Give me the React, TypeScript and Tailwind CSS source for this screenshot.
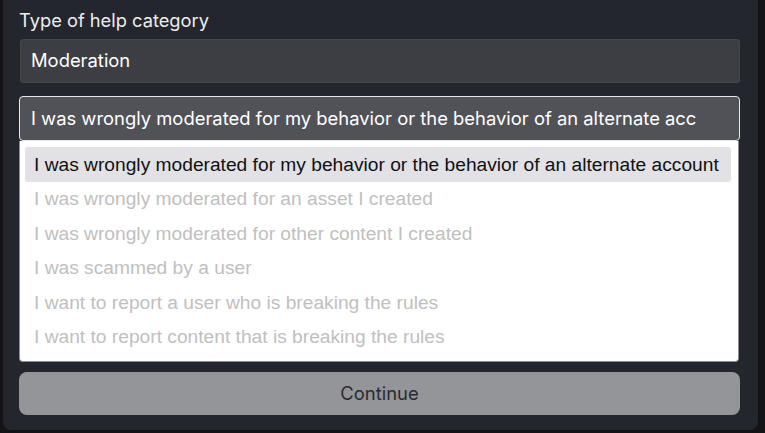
const options = [
  "I was wrongly moderated for my behavior or the behavior of an alternate account",
  "I was wrongly moderated for an asset I created",
  "I was wrongly moderated for other content I created",
  "I was scammed by a user",
  "I want to report a user who is breaking the rules",
  "I want to report content that is breaking the rules",
];

export default function App() {
  const selected = 0;

  return (
    <div className="w-[765px] h-[433px] bg-[#141416] overflow-hidden">
      <div className="w-[755px] h-[430px] ml-[3px] bg-[#24262d] rounded-b-lg px-[16px] pt-[9px] font-['Inter',sans-serif]">
        <div className="text-[18.3px] leading-[22px] text-[#ededef]">Type of help category</div>

        <div className="mt-[8px] ml-[1px] w-[720px] h-[44px] rounded-[3px] bg-[#3d3e44] border border-[#45474e] flex items-center px-[10px] text-[18.4px] text-white">
          Moderation
        </div>

        <div className="mt-[13px] w-[721px] h-[45px] rounded-[4px] bg-[#515257] border border-[#e8e8ea] flex items-center pl-[11px] pr-[43px] text-[18.4px] text-white">
          <span className="whitespace-nowrap overflow-hidden">{options[selected]}</span>
        </div>

        <div className="w-[720px] h-[221px] bg-white border border-t-0 border-[#8c8c8c] rounded-b-[4px] pt-[6px] pl-[5px] pr-[7px] font-['Liberation_Sans',Arial,sans-serif]">
          {options.map((o, i) => (
            <div
              key={o}
              className={
                i === selected
                  ? "h-[34.6px] flex items-center px-[9px] pt-[2px] rounded-[3px] bg-[#e2e1e6] text-[19.2px] text-[#111]"
                  : "h-[34.6px] flex items-center px-[9px] pt-[1px] text-[19.2px] text-[#c0c0c0]"
              }
            >
              {o}
            </div>
          ))}
        </div>

        <button className="mt-[10px] w-[721px] h-[43px] rounded-lg bg-[#949599] text-[18.4px] text-[#2a2b30] flex items-center justify-center">
          Continue
        </button>
      </div>
    </div>
  );
}
